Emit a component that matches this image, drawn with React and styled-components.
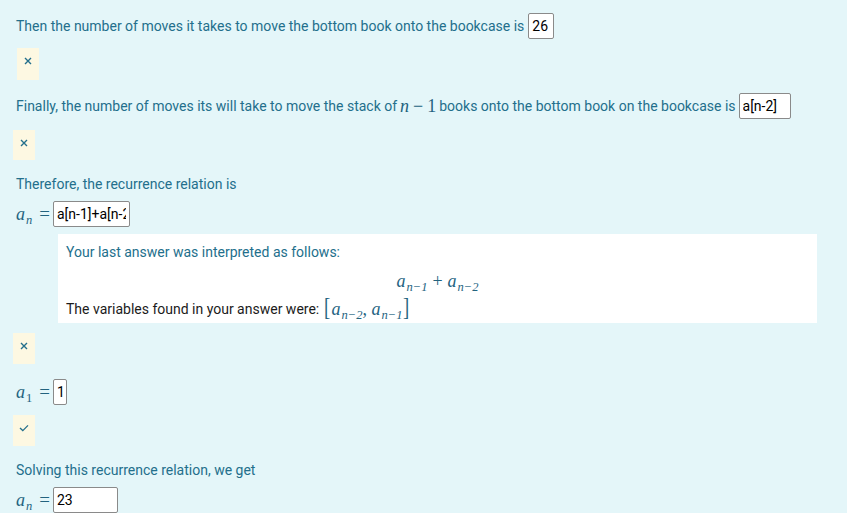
import React from "react";
import styled, { createGlobalStyle } from "styled-components";

const Global = createGlobalStyle`
  html, body { margin: 0; padding: 0; background: #e4f6f9; }
  body { font-family: Roboto, "Liberation Sans", sans-serif; }
`;

const Page = styled.div`
  display: flex;
  flex-direction: column;
  align-items: flex-start;
  padding: 13px 16px 0 16px;
  color: #236f8c;
  font-size: 14px;
  height: 513px;
  box-sizing: border-box;
  overflow: hidden;
`;

const Line = styled.div`
  display: flex;
  align-items: center;
  gap: 3px;
  min-height: ${(p) => p.$h || 20}px;
  line-height: 20px;
  margin-top: ${(p) => p.$mt || 0}px;
  white-space: nowrap;
`;

const Answer = styled.input`
  box-sizing: border-box;
  width: ${(p) => p.$w}px;
  height: 26px;
  margin: 0 0 0 ${(p) => p.$ml ?? 0}px;
  padding: 0 3px;
  border: 1px solid #8a8a8a;
  border-radius: 2px;
  background: #fff;
  color: #000;
  font-family: Roboto, "Liberation Sans", sans-serif;
  font-size: 14px;
  outline: none;
`;

const Feedback = styled.div`
  box-sizing: border-box;
  width: 22px;
  height: ${(p) => p.$h || 32}px;
  margin-top: ${(p) => p.$mt || 0}px;
  margin-left: ${(p) => p.$ml || 0}px;
  padding-top: 9px;
  background: #fdf8e2;
  display: flex;
  align-items: flex-start;
  justify-content: center;
  color: #236f8c;
`;

const M = styled.span`
  font-family: "Liberation Serif", "DejaVu Serif", serif;
  font-size: 18px;
  color: #23637f;
  font-style: ${(p) => (p.$up ? "normal" : "italic")};
  margin: 0 ${(p) => p.$mx || 0}px;
`;

const Sub = styled.sub`
  font-family: "Liberation Serif", "DejaVu Serif", serif;
  font-size: 12.5px;
  font-style: ${(p) => (p.$up ? "normal" : "italic")};
  vertical-align: -4px;
  line-height: 0;
  margin-left: 1px;
`;

const MathRow = styled.div`
  display: flex;
  align-items: center;
  margin-top: ${(p) => p.$mt || 0}px;
  height: 26px;
`;

const MathLabel = styled.span`
  display: inline-flex;
  align-items: baseline;
  width: 37px;
  font-family: "Liberation Serif", "DejaVu Serif", serif;
  color: #23637f;
`;

const Eq = styled.span`
  font-family: "Liberation Serif", "DejaVu Serif", serif;
  font-size: 19px;
  margin-left: auto;
  margin-right: 3px;
`;

const InfoBox = styled.div`
  align-self: stretch;
  margin: 7px 14px 0 42px;
  background: #fff;
  padding: 8px 8px 3px 8px;
  display: flex;
  flex-direction: column;
`;

const InfoText = styled.div`
  line-height: 20px;
  color: ${(p) => (p.$dark ? "#1b1b1b" : "#236f8c")};
  display: flex;
  align-items: center;
  gap: 4px;
  margin-top: ${(p) => p.$mt || 0}px;
`;

const Centered = styled.div`
  display: flex;
  justify-content: center;
  align-items: baseline;
  line-height: 20px;
  margin-top: 9px;
`;

const Bracket = styled.span`
  display: inline-block;
  font-family: "Liberation Serif", "DejaVu Serif", serif;
  font-size: 25px;
  color: #23637f;
  line-height: 20px;
  transform: scaleX(0.75);
`;

const Cross = () => (
  <svg width="8" height="8" viewBox="0 0 8 8">
    <path d="M1 1 L7 7 M7 1 L1 7" stroke="#236f8c" strokeWidth="1.4" />
  </svg>
);

const Check = () => (
  <svg width="10" height="8" viewBox="0 0 10 8">
    <path d="M1 4 L3.8 6.6 L9 1.4" stroke="#236f8c" strokeWidth="1.3" fill="none" />
  </svg>
);

const An = ({ sub }) => (
  <M>
    a<Sub>{sub}</Sub>
  </M>
);

export default function App() {
  return (
    <>
      <Global />
      <Page>
        <Line $h={25}>
          Then the number of moves it takes to move the bottom book onto the bookcase is
          <Answer $w={26} $ml={1} readOnly value="26" />
        </Line>
        <Feedback $mt={10} $h={33} $ml={1}>
          <Cross />
        </Feedback>
        <Line $h={25} $mt={14}>
          Finally, the number of moves its will take to move the stack of
          <span>
            <M>n</M>
            <M $up $mx={4}>−</M>
            <M $up>1</M>
          </span>
          books onto the bottom book on the bookcase is
          <Answer $w={52} readOnly value="a[n-2]" />
        </Line>
        <Feedback $mt={11} $ml={-3}>
          <Cross />
        </Feedback>
        <Line $mt={14}>Therefore, the recurrence relation is</Line>
        <MathRow $mt={7}>
          <MathLabel>
            <An sub="n" />
            <Eq>=</Eq>
          </MathLabel>
          <Answer $w={77} readOnly value="a[n-1]+a[n-2]" />
        </MathRow>
        <InfoBox>
          <InfoText>Your last answer was interpreted as follows:</InfoText>
          <Centered>
            <An sub="n−1" />
            <M $up $mx={5}>+</M>
            <An sub="n−2" />
          </Centered>
          <InfoText $dark $mt={6}>
            The variables found in your answer were:
            <span>
              <Bracket>[</Bracket>
              <An sub="n−2" />
              <M $up>, </M>
              <An sub="n−1" />
              <Bracket>]</Bracket>
            </span>
          </InfoText>
        </InfoBox>
        <Feedback $mt={10} $ml={-3}>
          <Cross />
        </Feedback>
        <MathRow $mt={15}>
          <MathLabel>
            <M>
              a<Sub $up>1</Sub>
            </M>
            <Eq>=</Eq>
          </MathLabel>
          <Answer $w={14} readOnly value="1" />
        </MathRow>
        <Feedback $mt={10} $ml={-3}>
          <Check />
        </Feedback>
        <Line $mt={14}>Solving this recurrence relation, we get</Line>
        <MathRow $mt={7}>
          <MathLabel>
            <An sub="n" />
            <Eq>=</Eq>
          </MathLabel>
          <Answer $w={65} readOnly value="23" />
        </MathRow>
      </Page>
    </>
  );
}
